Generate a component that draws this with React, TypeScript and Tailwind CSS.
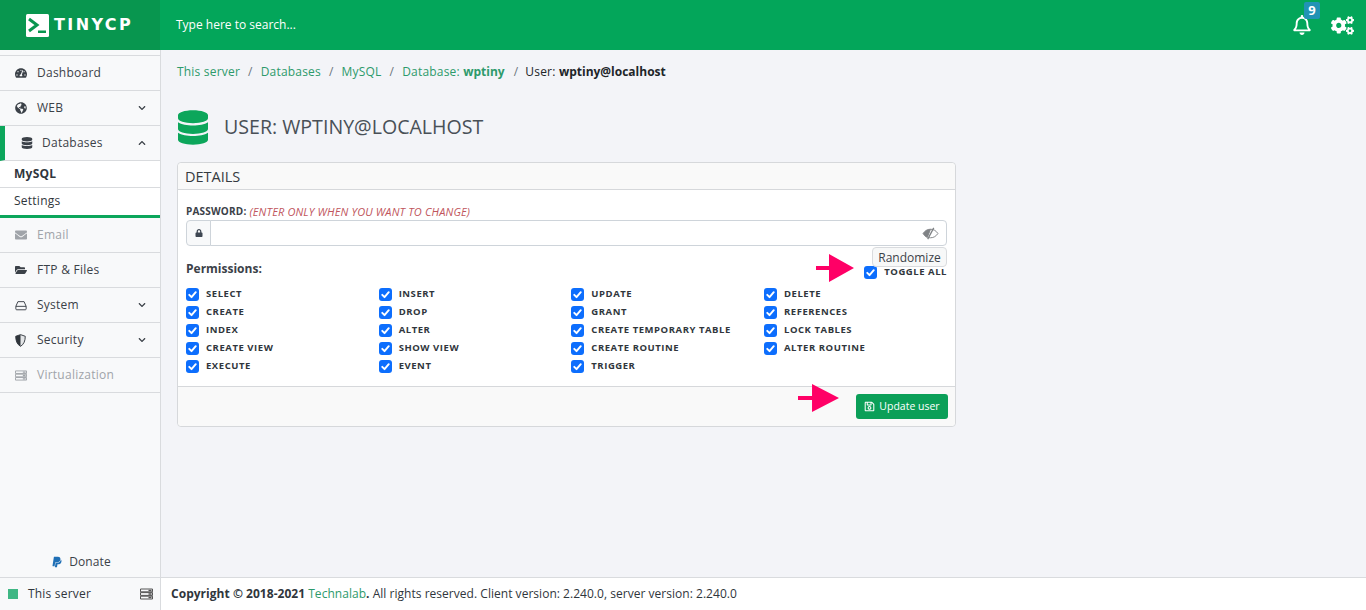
import React from "react";
import { FaTachometerAlt, FaGlobeAmericas, FaDatabase, FaEnvelope, FaFolderOpen, FaPaypal, FaLock, FaRegSave, FaRegBell, FaCogs, FaChevronDown, FaChevronUp } from "react-icons/fa";

const perms = ["SELECT","INSERT","UPDATE","DELETE","CREATE","DROP","GRANT","REFERENCES","INDEX","ALTER","CREATE TEMPORARY TABLE","LOCK TABLES","CREATE VIEW","SHOW VIEW","CREATE ROUTINE","ALTER ROUTINE","EXECUTE","EVENT","TRIGGER"];

function Check() {
  return (
    <span className="w-[13px] h-[13px] rounded-[3px] bg-[#0d6efd] flex items-center justify-center shrink-0">
      <svg viewBox="0 0 20 20" className="w-[13px] h-[13px]"><path d="M5 10.5l3.5 3.5L15 6.5" fill="none" stroke="#fff" strokeWidth="3" strokeLinecap="round" strokeLinejoin="round" /></svg>
    </span>
  );
}

function Arrow({ className }: { className: string }) {
  return (
    <svg viewBox="0 0 38 28" preserveAspectRatio="none" className={className}>
      <path d="M0 12h13V0l25 14-25 14V16H0z" fill="#ff0066" />
    </svg>
  );
}

function HddIcon() {
  return (
    <svg viewBox="0 0 14 12" className="w-[12px] h-[11px]" fill="none" stroke="currentColor" strokeWidth="1.1">
      <path d="M1 7l2.4-5.5h7.2L13 7v3a1 1 0 0 1-1 1H2a1 1 0 0 1-1-1z" />
      <path d="M1 7h12" />
    </svg>
  );
}

function ShieldIcon() {
  return (
    <svg viewBox="0 0 12 14" className="w-[11px] h-[13px]">
      <path d="M6 .6L11.2 2.4c0 4.8-1.4 8.8-5.2 11C2.2 11.2.8 7.2.8 2.4z" fill="#e4e6e8" stroke="#2f353b" strokeWidth="1" />
      <path d="M6 .6L.8 2.4c0 4.8 1.4 8.8 5.2 11z" fill="#2f353b" />
    </svg>
  );
}

function ServerIcon({ className }: { className: string }) {
  return (
    <svg viewBox="0 0 13 12" className={className} fill="none" stroke="currentColor" strokeWidth="1">
      <path d="M.5 1h12v2.8H.5zM.5 4.6h12v2.8H.5zM.5 8.2h12V11H.5z" />
      <path d="M8.5 2.4h3M8.5 6h3M8.5 9.6h3" strokeWidth="1.4" />
    </svg>
  );
}

function EyeIcon() {
  return (
    <svg viewBox="0 0 18 14" className="w-[17px] h-[13px]" fill="none">
      <path d="M1 7c2-3 4.6-4.6 8-4.6L5.6 11.2C3.6 10.4 2.2 9 1 7z" fill="#7f8285" stroke="#7f8285" strokeWidth="1" />
      <path d="M9 2.4c3.4 0 6 1.6 8 4.6-2 3-4.6 4.6-8 4.6-1 0-2-.1-3-.4" stroke="#7f8285" strokeWidth="1" />
      <path d="M12.5 1L6 13" stroke="#7f8285" strokeWidth="1.4" />
    </svg>
  );
}

function Item({ icon, label, chevron, muted, active }: { icon: React.ReactNode; label: string; chevron?: "up" | "down"; muted?: boolean; active?: boolean }) {
  return (
    <div className={`h-[35px] flex items-center border-b border-[#d9dbde] text-[12px] tracking-[0.25px] ${muted ? "text-[#a0a4a9]" : "text-[#3b4148]"} ${active ? "border-l-[5px] border-l-[#0ca65b] pl-[15px]" : "pl-[15px]"}`}>
      <span className="w-[22px] flex items-center text-[12px]">{icon}</span>
      <span className="flex-1">{label}</span>
      {chevron === "down" && <FaChevronDown className="w-[8px] h-[8px] mr-[14px]" />}
      {chevron === "up" && <FaChevronUp className="w-[8px] h-[8px] mr-[14px]" />}
    </div>
  );
}

export default function App() {
  return (
    <div className="w-[1366px] h-[610px] flex flex-col overflow-hidden bg-[#f3f4f8] text-[#30363c] font-['Open_Sans',sans-serif]">
      <header className="h-[50px] flex bg-[#03a65a] text-white shrink-0">
        <div className="w-[160px] bg-[#08964f] flex items-center pl-[26px] gap-[5px]">
          <svg viewBox="0 0 23 23" className="w-[23px] h-[23px]">
            <rect width="23" height="23" rx="1.5" fill="#fff" />
            <path d="M3 5l8 6-8 6" fill="none" stroke="#08964f" strokeWidth="3" />
            <path d="M12 16.5h8v2.5h-8z" fill="#08964f" />
          </svg>
          <span className="font-['DejaVu_Sans',sans-serif] font-bold text-[16px] tracking-[2.4px] leading-none">TINYCP</span>
        </div>
        <div className="flex-1 flex items-center pl-[16px] text-[12px]">Type here to search...</div>
        <div className="flex items-center gap-[19px] pr-[12px]">
          <span className="relative">
            <FaRegBell className="w-[20px] h-[20px]" />
            <span className="absolute -top-[13px] left-[12px] w-[16px] h-[17px] rounded-[2px] bg-[#2193b5] text-[13px] font-bold flex items-center justify-center">9</span>
          </span>
          <FaCogs className="w-[23px] h-[23px]" />
        </div>
      </header>

      <div className="flex-1 flex min-h-0">
        <aside className="w-[161px] shrink-0 bg-[#f8f9fa] border-r border-[#d9dbde] flex flex-col pt-[5px]">
          <div className="border-t border-[#d9dbde]">
            <Item icon={<FaTachometerAlt />} label="Dashboard" />
            <Item icon={<FaGlobeAmericas />} label="WEB" chevron="down" />
            <Item icon={<FaDatabase className="ml-px" />} label="Databases" chevron="up" active />
          </div>
          <div className="bg-white border-b-[3px] border-[#0ca65b] text-[12px] tracking-[0.25px]">
            <div className="h-[27px] flex items-center pl-[14px] font-bold border-b border-[#d9dbde]">MySQL</div>
            <div className="h-[27px] flex items-center pl-[14px] pb-px">Settings</div>
          </div>
          <Item icon={<FaEnvelope />} label="Email" muted />
          <Item icon={<FaFolderOpen />} label="FTP & Files" />
          <Item icon={<HddIcon />} label="System" chevron="down" />
          <Item icon={<ShieldIcon />} label="Security" chevron="down" />
          <Item icon={<ServerIcon className="w-[12px] h-[11px]" />} label="Virtualization" muted />
          <div className="mt-auto h-[32px] flex items-center justify-center gap-[6px] text-[12px] pl-[2px] pt-[2px] tracking-[0.1px] text-[#3b4148]">
            <FaPaypal className="w-[12px] h-[12px] text-[#1f6fb5]" />
            <span>Donate</span>
          </div>
        </aside>

        <main className="flex-1 pl-[16px] pt-[14px] min-w-0">
          <nav className="h-[16px] flex items-center gap-[8px] text-[12px] font-medium text-[#2d9a6b] tracking-[0.2px]">
            <span>This server</span><span className="text-[#6c757d]">/</span>
            <span>Databases</span><span className="text-[#6c757d]">/</span>
            <span>MySQL</span><span className="text-[#6c757d]">/</span>
            <span>Database: <b className="font-bold tracking-normal">wptiny</b></span><span className="text-[#6c757d] ml-px">/</span>
            <span className="text-[#212529] -ml-px">User: <b className="font-bold tracking-normal">wptiny@localhost</b></span>
          </nav>
          <div className="flex items-center mt-[30px] h-[35px] pl-px gap-[16px]">
            <FaDatabase className="w-[30px] h-[35px] text-[#0ca65b]" />
            <h1 className="text-[19.6px] font-medium text-[#495057] -mt-px">USER: WPTINY@LOCALHOST</h1>
          </div>
          <section className="relative mt-[17px] w-[779px] h-[265px] bg-white border border-[#d6d8db] rounded-[4px] flex flex-col">
            <div className="h-[27px] bg-[#f9f9f9] border-b border-[#d6d8db] rounded-t-[4px] flex items-center pl-[7px] pt-px text-[14.5px] text-[#343a40]">DETAILS</div>
            <div className="flex-1 px-[8px] pt-[15px]">
              <div className="h-[12px] flex items-center text-[10px] leading-none">
                <span className="font-bold tracking-[0.2px] text-[#3b4148]">PASSWORD:</span>
                <span className="ml-[3px] italic text-[11px] tracking-[0.15px] text-[#c0555c]">(ENTER ONLY WHEN YOU WANT TO CHANGE)</span>
              </div>
              <div className="mt-[3px] flex h-[26px] w-[761px]">
                <span className="w-[25px] bg-[#f8f9fa] border border-[#ced4da] rounded-l-[4px] flex items-center justify-center text-[#3e4752]">
                  <FaLock className="w-[8px] h-[8px]" />
                </span>
                <span className="flex-1 -ml-px bg-white border border-[#ced4da] rounded-r-[4px] flex items-center justify-end pr-[7px]">
                  <EyeIcon />
                </span>
              </div>
              <div className="flex items-center justify-between w-[761px] mt-[14px] h-[18px]">
                <span className="text-[12px] font-bold text-[#3b4148]">Permissions:</span>
                <span className="flex items-center gap-[7px] mt-[6px]">
                  <Check />
                  <span className="text-[9.5px] font-bold tracking-[0.55px]">TOGGLE ALL</span>
                </span>
              </div>
              <div className="grid grid-cols-[repeat(4,192.67px)] auto-rows-[18px] mt-[7px]">
                {perms.map((p) => (
                  <div key={p} className="flex items-center gap-[7px]">
                    <Check />
                    <span className="text-[9.5px] font-bold tracking-[0.55px] text-[#30363c]">{p}</span>
                  </div>
                ))}
              </div>
            </div>
            <div className="h-[40px] bg-[#f9f9f9] border-t border-[#d6d8db] rounded-b-[4px] flex items-center justify-end pr-[7px]">
              <button className="h-[25px] w-[92px] bg-[#0b9f58] rounded-[3px] text-white text-[10.5px] flex items-center justify-center gap-[4px]">
                <FaRegSave className="w-[11px] h-[11px]" />
                Update user
              </button>
            </div>
            <div className="absolute left-[694px] top-[84px] h-[20px] w-[75px] bg-[#f7f8f8] border border-[#d9dbde] rounded-[4px] flex items-center justify-center pt-px text-[12px] text-[#3b4148]">Randomize</div>
            <Arrow className="absolute left-[638px] top-[91px] w-[38px] h-[28px]" />
            <Arrow className="absolute left-[620px] top-[221px] w-[41px] h-[28px]" />
          </section>
        </main>
      </div>

      <footer className="h-[33px] flex bg-white border-t border-[#d9dbde] shrink-0 text-[12px]">
        <div className="w-[161px] bg-[#f8f9fa] border-r border-[#d9dbde] flex items-center pl-[8px] text-[#30363c]">
          <span className="w-[10px] h-[10px] bg-[#3fb784] mr-[10px]" />
          <span className="flex-1 tracking-[0.2px]">This server</span>
          <ServerIcon className="w-[13px] h-[12px] mr-[7px] text-[#555]" />
        </div>
        <div className="flex-1 flex items-center pl-[10px] whitespace-pre tracking-[0.03px]">
          <b className="font-bold">Copyright © 2018-2021 </b><span className="text-[#2d9a6b]">Technalab</span><b className="font-bold">.</b><span> All rights reserved. Client version: 2.240.0, server version: 2.240.0</span>
        </div>
      </footer>
    </div>
  );
}
